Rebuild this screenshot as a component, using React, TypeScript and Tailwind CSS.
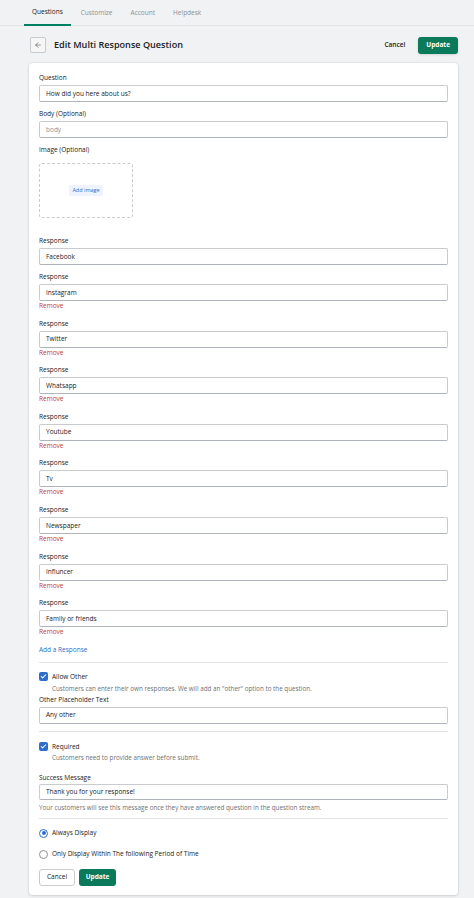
import { ArrowLeft, Check } from 'lucide-react';

const responses = [
  'Facebook',
  'Instagram',
  'Twitter',
  'Whatsapp',
  'Youtube',
  'Tv',
  'Newspaper',
  'Influncer',
  'Family or friends',
];

const tabs = ['Questions', 'Customize', 'Account', 'Helpdesk'];

const Field = ({
  label,
  value,
  placeholder,
  remove,
}: {
  label: string;
  value?: string;
  placeholder?: string;
  remove?: boolean;
}) => (
  <div className="mb-[7px]">
    <div className="h-[10px] leading-[10px] text-[6.5px] text-[#202223] mb-[2px]">{label}</div>
    <div className="h-[17px] border border-[#c9cccf] border-b-[#aeb4b9] rounded-[2px] bg-white flex items-center px-[6px] text-[6.5px]">
      {value ? (
        <span className="text-[#202223]">{value}</span>
      ) : (
        <span className="text-[#8c9196]">{placeholder}</span>
      )}
    </div>
    {remove && (
      <div className="h-[10.6px] leading-[10.6px] text-[6.5px] text-[#bf3a30]">Remove</div>
    )}
  </div>
);

const CheckBox = () => (
  <div className="w-[9px] h-[9px] rounded-[2px] bg-[#2c6ecb] flex items-center justify-center">
    <Check className="w-[7px] h-[7px] text-white" strokeWidth={3.5} />
  </div>
);

const App = () => {
  return (
    <div
      className="min-h-[898px] bg-[#f1f2f3] text-[#202223]"
      style={{ fontFamily: '"Open Sans", "Noto Sans", sans-serif' }}
    >
      {/* Tabs */}
      <div className="h-[26px] border-b border-[#e1e3e5] flex pl-[24px] gap-[2px]">
        {tabs.map((t, i) => (
          <div
            key={t}
            className={`px-[8px] h-[26px] flex items-center text-[6.5px] ${
              i === 0 ? 'text-[#202223] border-b-2 border-[#008060]' : 'text-[#8c9196]'
            }`}
          >
            {t}
          </div>
        ))}
      </div>

      <div className="pl-[29px] pr-[16px]">
        {/* Header */}
        <div className="flex items-center h-[18px] mt-[10px] mb-[9px]">
          <div className="w-[16px] h-[16px] border border-[#c9cccf] rounded-[2px] flex items-center justify-center bg-[#f6f6f7] ml-[1px]">
            <ArrowLeft className="w-[8px] h-[8px] text-[#5c5f62]" strokeWidth={2} />
          </div>
          <div className="ml-[8px] text-[9.1px] font-semibold text-[#202223]">Edit Multi Response Question</div>
          <div className="ml-auto text-[6.5px] font-semibold text-[#202223] mr-[13px]">Cancel</div>
          <div className="h-[17px] px-[8px] rounded-[3px] bg-[#0b7a5b] text-white text-[6.5px] font-bold flex items-center shadow-sm">
            Update
          </div>
        </div>

        {/* Card */}
        <div className="bg-white rounded-[4px] shadow-[0_0_0_1px_rgba(63,63,68,0.05),0_1px_3px_rgba(63,63,68,0.15)] px-[10px] pt-[10px] pb-[9px]">
          <Field label="Question" value="How did you here about us?" />
          <Field label="Body (Optional)" placeholder="body" />

          <div className="h-[10px] leading-[10px] text-[6.5px] mb-[8px]">Image (Optional)</div>
          <div className="w-[94px] h-[55px] border border-dashed border-[#c9cccf] rounded-[3px] flex items-center justify-center mb-[18px]">
            <div className="bg-[#eef3fd] text-[#2c6ecb] text-[5.5px] px-[3px] py-[1px] rounded-[1px]">Add image</div>
          </div>

          {responses.map((r, i) => (
            <Field key={r} label="Response" value={r} remove={i > 0} />
          ))}

          <div className="h-[10px] leading-[10px] text-[6.5px] text-[#2c6ecb] mt-[1px]">Add a Response</div>
          <div className="border-t border-[#e1e3e5] mt-[7px] mb-[9px]" />

          {/* Allow other */}
          <div className="flex items-center gap-[4px] h-[10px]">
            <CheckBox />
            <span className="text-[6.5px]">Allow Other</span>
          </div>
          <div className="pl-[13px] text-[6.3px] text-[#6d7175] h-[11px] leading-[11px] mt-[1px] mb-[1px]">
            Customers can enter their own responses. We will add an "other" option to the question.
          </div>
          <Field label="Other Placeholder Text" value="Any other" />
          <div className="border-t border-[#e1e3e5] mt-[1px] mb-[10px]" />

          {/* Required */}
          <div className="flex items-center gap-[4px] h-[10px]">
            <CheckBox />
            <span className="text-[6.5px]">Required</span>
          </div>
          <div className="pl-[13px] text-[6.3px] text-[#6d7175] h-[11px] leading-[11px] mb-[10px]">
            Customers need to provide answer before submit.
          </div>
          <div className="h-[10px] leading-[10px] text-[6.5px] mb-[1px]">Success Message</div>
          <div className="h-[16px] border border-[#c9cccf] border-b-[#aeb4b9] rounded-[2px] flex items-center px-[6px] text-[6.5px]">
            Thank you for your response!
          </div>
          <div className="text-[6.3px] text-[#6d7175] h-[11px] leading-[11px] mt-[2px]">
            Your customers will see this message once they have answered question in the question stream.
          </div>
          <div className="border-t border-[#e1e3e5] mt-[5px] mb-[9px]" />

          {/* Radios */}
          <div className="flex items-center gap-[4px] h-[11px]">
            <div className="w-[9px] h-[9px] rounded-full border border-[#2c6ecb] flex items-center justify-center">
              <div className="w-[4px] h-[4px] rounded-full bg-[#2c6ecb]" />
            </div>
            <span className="text-[6.5px]">Always Display</span>
          </div>
          <div className="flex items-center gap-[4px] h-[11px] mt-[10px]">
            <div className="w-[9px] h-[9px] rounded-full border border-[#8c9196]" />
            <span className="text-[6.5px]">Only Display Within The following Period of Time</span>
          </div>

          <div className="flex gap-[4px] mt-[9px]">
            <div className="h-[17px] w-[36px] border border-[#c9cccf] rounded-[3px] flex items-center justify-center text-[6.5px] bg-white">
              Cancel
            </div>
            <div className="h-[17px] w-[37px] rounded-[3px] bg-[#0b7a5b] text-white flex items-center justify-center text-[6.5px] font-bold">
              Update
            </div>
          </div>
        </div>
      </div>
    </div>
  );
};

export default App;
